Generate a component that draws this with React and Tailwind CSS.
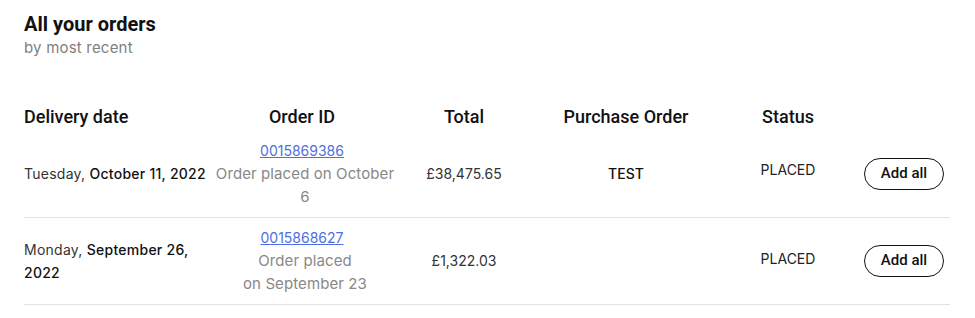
export default function App() {
  const head = "font-['Roboto',sans-serif] font-medium text-[18px] leading-[28px] text-[#111]";
  const body = "font-['Inter',sans-serif] text-[14px] leading-[23px]";
  const rows = [
    {
      day: "Tuesday,",
      date: <>October 11, 2022</>,
      id: "0015869386",
      placed: <>Order placed on October<br />6</>,
      total: "£38,475.65",
      po: "TEST",
      pad: "pb-[8px]",
    },
    {
      day: "Monday,",
      date: <>September 26,<br />2022</>,
      id: "0015868627",
      placed: <>Order placed<br />on September 23</>,
      total: "£1,322.03",
      po: "",
      pad: "pb-[4px]",
    },
  ];
  return (
    <div className="w-[975px] h-[318px] bg-white px-6 pt-[10px]">
      <h1 className="font-['Roboto',sans-serif] font-bold text-[20px] leading-[28px] text-[#111]">All your orders</h1>
      <p className="font-['Inter',sans-serif] text-[15px] leading-[19px] tracking-[0.2px] text-[#808080]">by most recent</p>
      <div className="w-[926px] mt-[46px]">
        <div className="grid grid-cols-[183px_190px_134px_190px_134px_1fr] items-center">
          <div className={head}>Delivery date</div>
          <div className={`${head} text-center`}>Order ID</div>
          <div className={`${head} text-center`}>Total</div>
          <div className={`${head} text-center`}>Purchase Order</div>
          <div className={`${head} text-center`}>Status</div>
          <div />
        </div>
        {rows.map((r) => (
          <div key={r.id} className="grid grid-cols-[183px_190px_134px_190px_134px_1fr] items-center pt-[8px] pb-[9px] border-b border-[#e2e2e2]">
            <div className={`${body} tracking-[0.25px] text-[#333]`}>
              {r.day} <span className="font-medium text-[#111]">{r.date}</span>
            </div>
            <div className={`${body} text-center text-[#888]`}>
              <a href="#" className="text-[#4f6fe0] underline">{r.id}</a>
              <div className="text-[15px] tracking-[0.1px] pl-[6px]">{r.placed}</div>
            </div>
            <div className={`${body} text-center text-[#333]`}>{r.total}</div>
            <div className={`${body} text-center font-medium text-[#111]`}>{r.po}</div>
            <div className={`${body} text-center text-[#222] ${r.pad}`}>PLACED</div>
            <div className="flex justify-end pr-[6px]">
              <button className="w-[80px] h-[32px] rounded-full border-[1.5px] border-[#111] font-['Roboto',sans-serif] font-medium text-[15px] text-[#111] flex items-center justify-center">
                Add all
              </button>
            </div>
          </div>
        ))}
      </div>
    </div>
  );
}
